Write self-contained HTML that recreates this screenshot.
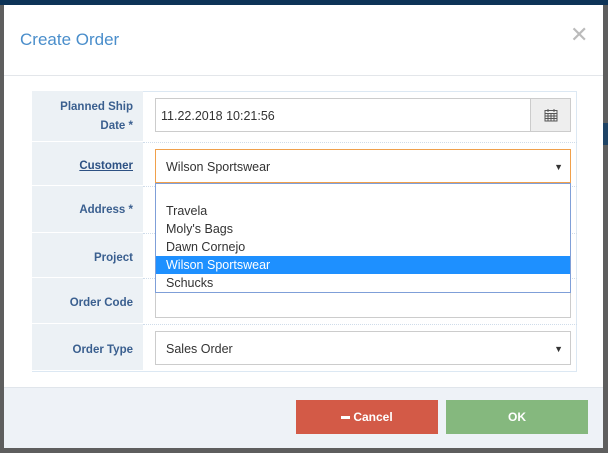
<!DOCTYPE html>
<html><head><meta charset="utf-8"><style>
*{box-sizing:border-box;margin:0;padding:0}
body{width:608px;height:453px;overflow:hidden;background:#5e5e5e;font-family:"Liberation Sans",sans-serif;position:relative}
.abs{position:absolute}
.lbl{position:absolute;left:32px;width:111px;background:#ecf1f5;color:#3a5f8f;font-weight:bold;font-size:11.5px;text-align:right;padding-right:10px;padding-top:6px;display:flex;align-items:center;justify-content:flex-end;line-height:19px;border-bottom:1px solid #fff}
.inp{position:absolute;left:155px;width:416px;background:#fff;border:1px solid #ccc;font-size:12.5px;color:#333;padding-left:10px;padding-top:2px;display:flex;align-items:center}
.dots{position:absolute;left:143px;width:434px;border-top:1px dotted #cfdcea}
.arr{position:absolute;right:7px;font-size:9px;color:#333}
.item{position:absolute;left:0;width:100%;height:18px;line-height:18px;padding-left:10px;font-size:12.5px;color:#333}
</style></head><body>
<div class="abs" style="left:0;top:0;width:608px;height:5px;background:#0d3357"></div>
<div class="abs" style="left:603px;top:123px;width:5px;height:22px;background:#1f4466"></div>
<div class="abs" style="left:4px;top:5px;width:599px;height:443px;background:#fff"></div>
<div class="abs" style="left:20px;top:30px;font-size:17px;color:#4a8ecb">Create Order</div>
<div class="abs" style="left:570px;top:22px;font-size:22px;color:#bbb">✕</div>
<div class="abs" style="left:4px;top:75px;width:599px;height:1px;background:#e3e6ea"></div>
<div class="abs" style="left:32px;top:91px;width:545px;height:281px;border:1px solid #dce8f3"></div>
<div class="lbl" style="top:91px;height:51px;padding-top:2px">Planned Ship<br>Date *</div>
<div class="lbl" style="top:142px;height:44px;text-decoration:underline;color:#2d5183">Customer</div>
<div class="lbl" style="top:186px;height:47px;align-items:flex-start;padding-top:15px">Address *</div>
<div class="lbl" style="top:233px;height:45px">Project</div>
<div class="lbl" style="top:278px;height:46px">Order Code</div>
<div class="lbl" style="top:324px;height:47px">Order Type</div>
<div class="dots" style="top:142px"></div><div class="dots" style="top:186px"></div><div class="dots" style="top:233px"></div><div class="dots" style="top:278px"></div><div class="dots" style="top:324px"></div>
<div class="inp" style="top:98px;height:34px;padding-left:5px">11.22.2018 10:21:56
<div class="abs" style="right:-1px;top:-1px;width:41px;height:34px;background:#eee;border:1px solid #ccc">
<svg class="abs" style="left:13px;top:9px" width="14" height="14" viewBox="0 0 14 14" fill="none" stroke="#555" stroke-width="1"><rect x="1" y="2.5" width="12" height="10.5"/><path d="M1 5.5h12M1 8h12M1 10.5h12M4 5.5v7.5M7 5.5v7.5M10 5.5v7.5M4 1v3M10 1v3"/></svg></div></div>
<div class="inp" style="top:149px;height:34px;border-color:#f0a04b">Wilson Sportswear<span class="arr">▼</span></div>
<div class="inp" style="top:282px;height:36px"></div>
<div class="abs" style="left:155px;top:183px;width:416px;height:110px;background:#fff;border:1px solid #7f9fd8">
<div class="item" style="top:18px">Travela</div>
<div class="item" style="top:36px">Moly's Bags</div>
<div class="item" style="top:54px">Dawn Cornejo</div>
<div class="item" style="top:72px;background:#1e90ff;color:#fff">Wilson Sportswear</div>
<div class="item" style="top:90px">Schucks</div>
</div>
<div class="inp" style="top:331px;height:34px">Sales Order<span class="arr">▼</span></div>
<div class="abs" style="left:4px;top:387px;width:599px;height:61px;background:#eef2f7;border-top:1px solid #e0e5eb"></div>
<div class="abs" style="left:296px;top:400px;width:142px;height:34px;background:#d35a47;color:#fff;font-size:12px;font-weight:bold;display:flex;align-items:center;justify-content:center"><span style="display:inline-block;width:9px;height:3px;background:#fff;margin-right:3px"></span>Cancel</div>
<div class="abs" style="left:446px;top:400px;width:142px;height:34px;background:#85b87e;color:#fff;font-size:12px;font-weight:bold;display:flex;align-items:center;justify-content:center">OK</div>
</body></html>
